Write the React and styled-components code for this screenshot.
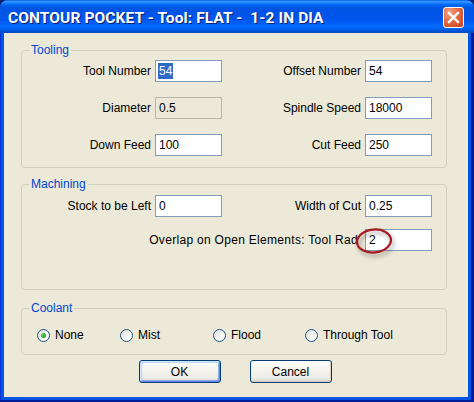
import React from "react";
import styled, { createGlobalStyle } from "styled-components";

const Global = createGlobalStyle`
  html, body { margin: 0; padding: 0; background: #0a1f6e; }
  body { font-family: "Liberation Sans", Arial, sans-serif; }
  * { box-sizing: border-box; }
`;

const Window = styled.div`
  width: 474px;
  height: 402px;
  display: flex;
  flex-direction: column;
  border-radius: 8px 8px 0 0;
  overflow: hidden;
  background: #0055e5;
`;

const TitleBar = styled.div`
  height: 33px;
  flex: none;
  display: flex;
  align-items: center;
  justify-content: space-between;
  padding: 0 10px 0 8px;
  background: linear-gradient(
    to bottom,
    #0058ee 0%,
    #3593ff 4%,
    #288eff 7%,
    #127dff 10%,
    #036ffc 13%,
    #0262ee 17%,
    #0057e5 22%,
    #0054e3 30%,
    #0055eb 56%,
    #005bf5 68%,
    #026afe 80%,
    #0062ef 88%,
    #0052d6 94%,
    #0046c0 100%
  );
`;

const Title = styled.div`
  color: #ffffff;
  font-family: "Liberation Sans Narrow", "Roboto", "Liberation Sans", sans-serif;
  font-weight: 700;
  font-size: 15.5px;
  letter-spacing: 0.1px;
  white-space: pre;
  text-shadow: 1px 1px 0 #0a1f6e;
  padding-top: 2px;
`;

const CloseButton = styled.div`
  width: 21px;
  height: 21px;
  border: 1px solid #ffffff;
  border-radius: 3px;
  background: radial-gradient(circle at 30% 25%, #f5a488 0%, #e26a45 45%, #c8401b 100%);
  display: flex;
  align-items: center;
  justify-content: center;
  margin-top: 2px;
`;

const Frame = styled.div`
  flex: 1;
  display: flex;
  padding: 0 6px 5px 4px;
  background: #0055e5;
  box-shadow: inset -3px -2px 0 #001c9a, inset 1px 0 0 #0831d9;
`;

const Client = styled.div`
  flex: 1;
  background: #ece9d8;
  display: flex;
  flex-direction: column;
  padding: 10px 21px 0 17px;
`;

const Group = styled.fieldset`
  margin: ${(p) => p.$mt}px 0 0;
  padding: ${(p) => p.$pad};
  border: 1px solid #d0d0bf;
  border-radius: 4px;
  min-width: 0;
  position: relative;
`;

const Legend = styled.legend`
  margin-left: 7px;
  padding: 0 2px;
  color: #0046d5;
  font-size: 12px;
  line-height: 14px;
`;

const FieldGrid = styled.div`
  display: grid;
  grid-template-columns: 129px 67px 1fr 67px;
  column-gap: 4px;
  row-gap: ${(p) => p.$gap}px;
  align-items: center;
`;

const Label = styled.div`
  font-size: 12px;
  color: #000;
  text-align: right;
  white-space: nowrap;
`;

const WideLabel = styled.div`
  grid-column: 1 / 4;
  justify-self: end;
  padding-right: 3px;
  white-space: nowrap;
  font-size: 12px;
  letter-spacing: 0.3px;
  color: #000;
`;

const Cell = styled.div`
  position: relative;
`;

const TextBox = styled.div`
  height: 22px;
  border: 1px solid ${(p) => (p.$disabled ? "#b9b7ab" : "#7f9db9")};
  background: ${(p) => (p.$disabled ? "#ece9d8" : "#ffffff")};
  padding: 0 2px;
  font-size: 12px;
  color: #000;
  display: flex;
  align-items: center;
  white-space: nowrap;
`;

const Selected = styled.span`
  background: #316ac5;
  color: #fff;
  padding: 1px 1px;
`;

const Plain = styled.span`
  padding-left: 1px;
`;

const Circle = styled.svg`
  position: absolute;
  left: -13px;
  top: -5px;
  overflow: visible;
  filter: drop-shadow(2px 3px 2px rgba(0, 0, 0, 0.35));
  pointer-events: none;
`;

const RadioRow = styled.div`
  display: grid;
  grid-template-columns: 83px 93px 92px auto;
  padding-left: 15px;
  align-items: center;
`;

const RadioItem = styled.div`
  display: flex;
  align-items: center;
  gap: 5px;
  font-size: 12px;
  color: #000;
`;

const RadioDot = styled.div`
  width: 13px;
  height: 13px;
  border-radius: 50%;
  border: 1px solid #1c5180;
  background: linear-gradient(135deg, #dcdcd7 0%, #f6f6f4 60%, #ffffff 100%);
  display: flex;
  align-items: center;
  justify-content: center;
  &::after {
    content: "";
    display: ${(p) => (p.$checked ? "block" : "none")};
    width: 5px;
    height: 5px;
    border-radius: 50%;
    background: radial-gradient(circle at 35% 35%, #5fd05f 0%, #21a121 70%);
  }
`;

const ButtonRow = styled.div`
  display: flex;
  justify-content: center;
  gap: 29px;
  margin-top: 5px;
  padding-left: 2px;
`;

const Button = styled.div`
  width: 82px;
  height: 23px;
  border: 1px solid #003c74;
  border-radius: 3px;
  background: linear-gradient(to bottom, #ffffff 0%, #f4f3ee 40%, #ecebe6 80%, #d6d0c5 100%);
  display: flex;
  align-items: center;
  justify-content: center;
  font-size: 12px;
  color: #000;
  box-shadow: ${(p) =>
    p.$default
      ? "inset 1px 1px 0 #cee7ff, inset -1px -1px 0 #6982ee, inset 2px 2px 0 #bcd4f6, inset -2px -2px 0 #89ade4"
      : "inset -1px -1px 0 #d6d0c5"};
`;

function Field({ label, value, selected, disabled, children }) {
  return (
    <>
      <Label>{label}</Label>
      <Cell>
        <TextBox $disabled={disabled}>
          {selected ? <Selected>{value}</Selected> : <Plain>{value}</Plain>}
        </TextBox>
        {children}
      </Cell>
    </>
  );
}

export default function App() {
  return (
    <>
      <Global />
      <Window>
        <TitleBar>
          <Title>{"CONTOUR POCKET - Tool: FLAT -  1-2 IN DIA"}</Title>
          <CloseButton>
            <svg width="13" height="13" viewBox="0 0 13 13">
              <path d="M2 2 L11 11 M11 2 L2 11" stroke="#fff" strokeWidth="2.4" strokeLinecap="square" />
            </svg>
          </CloseButton>
        </TitleBar>
        <Frame>
          <Client>
            <Group $mt={0} $pad="3px 14px 11px 0">
              <Legend>Tooling</Legend>
              <FieldGrid $gap={15}>
                <Field label="Tool Number" value="54" selected />
                <Field label="Offset Number" value="54" />
                <Field label="Diameter" value="0.5" disabled />
                <Field label="Spindle Speed" value="18000" />
                <Field label="Down Feed" value="100" />
                <Field label="Cut Feed" value="250" />
              </FieldGrid>
            </Group>

            <Group $mt={9} $pad="4px 14px 38px 0">
              <Legend>Machining</Legend>
              <FieldGrid $gap={12}>
                <Field label="Stock to be Left" value="0" />
                <Field label="Width of Cut" value="0.25" />
                <WideLabel>Overlap on Open Elements: Tool Rad</WideLabel>
                <Cell>
                  <TextBox>
                    <Plain>2</Plain>
                  </TextBox>
                  <Circle width="44" height="34" viewBox="0 0 44 34">
                    <ellipse
                      cx="22"
                      cy="17"
                      rx="17"
                      ry="11.5"
                      fill="none"
                      stroke="#a81a24"
                      strokeWidth="2.2"
                      transform="rotate(-6 22 17)"
                    />
                  </Circle>
                </Cell>
              </FieldGrid>
            </Group>

            <Group $mt={11} $pad="13px 0 12px 0">
              <Legend>Coolant</Legend>
              <RadioRow>
                <RadioItem>
                  <RadioDot $checked />
                  None
                </RadioItem>
                <RadioItem>
                  <RadioDot />
                  Mist
                </RadioItem>
                <RadioItem>
                  <RadioDot />
                  Flood
                </RadioItem>
                <RadioItem>
                  <RadioDot />
                  Through Tool
                </RadioItem>
              </RadioRow>
            </Group>

            <ButtonRow>
              <Button $default>OK</Button>
              <Button>Cancel</Button>
            </ButtonRow>
          </Client>
        </Frame>
      </Window>
    </>
  );
}
